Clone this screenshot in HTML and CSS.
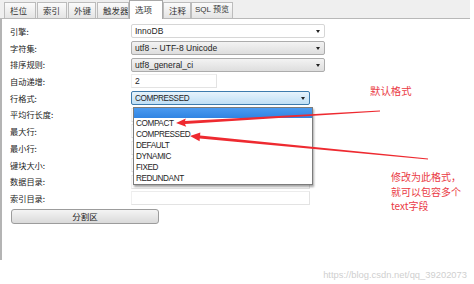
FILE: index.html
```html
<!DOCTYPE html>
<html>
<head>
<meta charset="utf-8">
<link rel="stylesheet" href="styles.css">
</head>
<body>
<div class="page">
  <div class="tabbar">
    <div class="tab t1">栏位</div>
    <div class="tab t2">索引</div>
    <div class="tab t3">外键</div>
    <div class="tab t4">触发器</div>
    <div class="tab t5 active">选项</div>
    <div class="tab t6">注释</div>
    <div class="tab t7">SQL 预览</div>
  </div>
  <div class="main">
    <div class="form">
      <div class="label">引擎:</div>
      <div class="field"><div class="select plain w194"><span>InnoDB</span><i class="caret"></i></div></div>
      <div class="label">字符集:</div>
      <div class="field"><div class="select gray w194"><span>utf8 -- UTF-8 Unicode</span><i class="caret"></i></div></div>
      <div class="label">排序规则:</div>
      <div class="field"><div class="select gray w194"><span>utf8_general_ci</span><i class="caret"></i></div></div>
      <div class="label">自动递增:</div>
      <div class="field"><div class="input w85"><span>2</span></div></div>
      <div class="label">行格式:</div>
      <div class="field"><div class="select blue w179"><span class="caps">COMPRESSED</span><i class="caret"></i></div></div>
      <div class="label">平均行长度:</div>
      <div class="field"><div class="input w179"></div></div>
      <div class="label">最大行:</div>
      <div class="field"><div class="input w179"></div></div>
      <div class="label">最小行:</div>
      <div class="field"><div class="input w179"></div></div>
      <div class="label">键块大小:</div>
      <div class="field"><div class="input w179"></div></div>
      <div class="label">数据目录:</div>
      <div class="field"><div class="input w179"></div></div>
      <div class="label">索引目录:</div>
      <div class="field"><div class="input w179"></div></div>
    </div>
    <div class="btnrow"><div class="button">分割区</div></div>
  </div>

  <div class="dropdown">
    <div class="hl"></div>
    <div class="opt">COMPACT</div>
    <div class="opt">COMPRESSED</div>
    <div class="opt">DEFAULT</div>
    <div class="opt">DYNAMIC</div>
    <div class="opt">FIXED</div>
    <div class="opt">REDUNDANT</div>
  </div>

  <svg class="arrows" width="474" height="284" viewBox="0 0 474 284">
    <polygon fill="#ee2a30" points="176,123 185.8,118.4 185,121 380,110.4 380,111.6 185,124 186.2,126.8"/>
    <polygon fill="#ee2a30" points="190,136 200.3,132.6 200.1,135.4 428,158.4 428,159.6 199.8,138.6 199.6,141.2"/>
  </svg>

  <div class="note n1">默认格式</div>
  <div class="note n2">修改为此格式，<br>就可以包容多个<br>text字段</div>
  <div class="watermark">https://blog.csdn.net/qq_39202073</div>
</div>
</body>
</html>
```
FILE: styles.css
```css
html, body {
  margin: 0;
  padding: 0;
  background: #ffffff;
}
.page {
  position: relative;
  width: 474px;
  height: 284px;
  overflow: hidden;
  background: #ffffff;
  font-family: "Liberation Sans", "Noto Sans CJK SC", sans-serif;
  color: #1e1e1e;
}
.tabbar {
  display: flex;
  align-items: flex-end;
  height: 18px;
  padding-left: 4px;
  background: #efefef;
  border-bottom: 1px solid #b8b8b8;
  width: 466px;
}
.tab {
  box-sizing: border-box;
  height: 16px;
  border: 1px solid #bcbcbc;
  border-bottom: none;
  background: linear-gradient(#fbfbfb, #e4e4e4);
  font-family: "Noto Sans CJK SC", sans-serif;
  font-size: 8.5px;
  line-height: 14px;
  padding-left: 5px;
  color: #333;
  white-space: nowrap;
  overflow: hidden;
}
.t1 { width: 32px; margin-right: 1px; }
.t2 { width: 30px; margin-right: 1px; }
.t3 { width: 28px; margin-right: 1px; }
.t4 { width: 32px; }
.t5 { width: 34px; }
.t6 { width: 28px; }
.t7 { width: 42px; padding-left: 3px; font-size: 8px; font-family: "Liberation Sans", "Noto Sans CJK SC", sans-serif; }
.tab.active {
  height: 19px;
  margin-bottom: -1px;
  background: #ffffff;
  border-color: #a9a9a9;
  line-height: 17px;
  position: relative;
}
.main {
  box-sizing: border-box;
  height: 241px;
  border-left: 2px solid #b4b4b4;
  padding-top: 4px;
}
.form {
  display: grid;
  grid-template-columns: 121px 1fr;
  grid-auto-rows: 16.7px;
  padding-left: 8px;
}
.label {
  font-family: "Noto Sans CJK SC", sans-serif;
  font-size: 8.2px;
  line-height: 16.7px;
  color: #222;
}
.field {
  display: flex;
  align-items: center;
}
.select, .input {
  box-sizing: border-box;
  height: 14px;
  display: flex;
  align-items: center;
  padding-left: 3px;
  font-size: 8.5px;
  position: relative;
}
.w194 { width: 194px; }
.w179 { width: 179px; }
.w85 { width: 86px; }
.plain {
  background: #ffffff;
  border: 1px solid #d6d6d6;
  border-radius: 2px;
}
.gray {
  background: linear-gradient(#f3f3f3, #dedede);
  border: 1px solid #acacac;
  border-radius: 2px;
}
.blue {
  background: linear-gradient(#e6f3fc, #bfdff6);
  border: 1px solid #3d7bad;
  border-radius: 2px;
}
.input {
  background: #fff;
  border: 1px solid #e3e3e3;
  border-left-color: #f0f0f0;
  border-top-color: #ececec;
}
.caps {
  font-size: 8.2px;
  letter-spacing: -0.4px;
}
.caret {
  position: absolute;
  right: 4px;
  top: 5px;
  width: 0;
  height: 0;
  border-left: 2.5px solid transparent;
  border-right: 2.5px solid transparent;
  border-top: 3px solid #222;
}
.btnrow {
  padding-left: 9px;
  margin-top: 2px;
}
.button {
  box-sizing: border-box;
  width: 148px;
  height: 15px;
  border: 1px solid #9c9c9c;
  border-radius: 3px;
  background: linear-gradient(#f4f4f4, #dadada);
  text-align: center;
  font-family: "Noto Sans CJK SC", sans-serif;
  font-size: 8.5px;
  line-height: 13px;
  color: #222;
}
.dropdown {
  position: absolute;
  left: 133px;
  top: 107px;
  box-sizing: border-box;
  width: 180px;
  height: 78px;
  background: #ffffff;
  border: 1px solid #7c7c7c;
  box-shadow: 1px 2px 2px rgba(0, 0, 0, 0.35);
}
.hl {
  height: 10px;
  background: linear-gradient(#4a9af0, #3084e2);
}
.opt {
  height: 11px;
  line-height: 11px;
  padding-left: 2px;
  font-size: 8.2px;
  letter-spacing: -0.4px;
  color: #1e1e1e;
}
.arrows {
  position: absolute;
  left: 0;
  top: 0;
}
.note {
  position: absolute;
  color: #ea3a44;
  font-family: "Noto Sans CJK SC", sans-serif;
  font-size: 10px;
  line-height: 14.6px;
}
.n1 {
  left: 370px;
  top: 84px;
  font-size: 10.4px;
}
.n2 {
  left: 391px;
  top: 170px;
}
.watermark {
  position: absolute;
  right: 7px;
  top: 269px;
  font-size: 9.4px;
  color: #cfcfcf;
  white-space: nowrap;
}
```
